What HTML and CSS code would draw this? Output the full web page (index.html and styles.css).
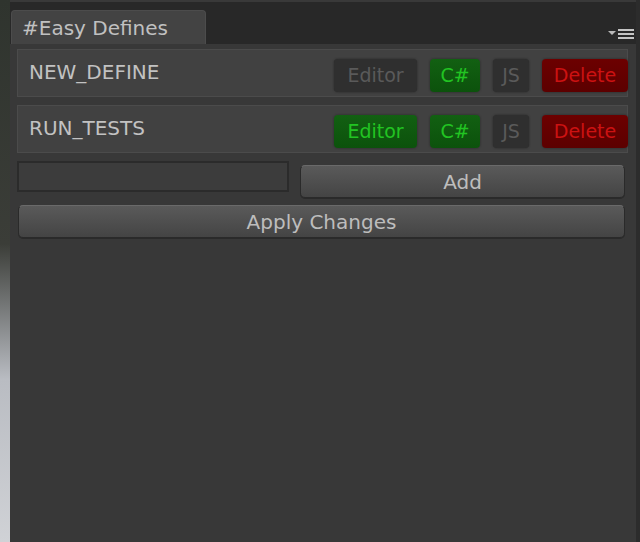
FILE: index.html
```html
<!doctype html>
<html lang="en">
<head>
    <meta charset="UTF-8">
    <title>Easy Defines</title>
    <link rel="stylesheet" href="styles.css">
</head>
<body>
    <div class="backdrop"></div>
    <div class="window">
        <div class="tabbar">
            <div class="tab">#Easy Defines</div>
            <div class="tab-menu">
                <svg width="30" height="12" viewBox="0 0 30 12">
                    <path d="M2 3h8l-4 4z" fill="#b8b8b8"/>
                    <rect x="12" y="1" width="16" height="2" fill="#c4c4c4"/>
                    <rect x="12" y="5" width="16" height="2" fill="#c4c4c4"/>
                    <rect x="12" y="9" width="16" height="2" fill="#c4c4c4"/>
                </svg>
            </div>
        </div>
        <div class="content">
            <div class="define">
                <span class="name">NEW_DEFINE</span>
                <div class="toggles">
                    <a href="#" class="btn off editor">Editor</a>
                    <a href="#" class="btn on cs">C#</a>
                    <a href="#" class="btn off js">JS</a>
                    <a href="#" class="btn del">Delete</a>
                </div>
            </div>
            <div class="define">
                <span class="name">RUN_TESTS</span>
                <div class="toggles">
                    <a href="#" class="btn on editor">Editor</a>
                    <a href="#" class="btn on cs">C#</a>
                    <a href="#" class="btn off js">JS</a>
                    <a href="#" class="btn del">Delete</a>
                </div>
            </div>
            <div class="add-row">
                <input type="text" class="field">
                <a href="#" class="push add">Add</a>
            </div>
            <a href="#" class="push apply">Apply Changes</a>
        </div>
    </div>
</body>
</html>
```

FILE: styles.css
```css
/*reset*/
*{
    margin:0;
    padding:0;
    box-sizing: border-box;
}
a{
    text-decoration:none;
}
body{
    display: flex;
    height: 542px;
    overflow: hidden;
    background: #383838;
    font-family: "DejaVu Sans", "Liberation Sans", sans-serif;
}

.backdrop{
    width: 10px;
    flex: none;
    background: linear-gradient(#2f342e 0%, #3b3d38 45%, #b9bcc2 70%, #d0d2d6 100%);
}
.window{
    flex: 1;
    display: flex;
    flex-direction: column;
    border-right: 4px solid #2c2c2c;
}

.tabbar{
    height: 44px;
    background: #282828;
    border-top: 2px solid #393939;
    display: flex;
    align-items: flex-end;
    padding-left: 1px;
}
.tab{
    width: 195px;
    height: 34px;
    background: #434343;
    border: 1px solid #4c4c4c;
    border-bottom: none;
    border-radius: 4px 4px 0 0;
    color: #c0c0c0;
    font-size: 20px;
    line-height: 34px;
    padding-left: 10px;
}
.tab-menu{
    margin-left: auto;
    padding-bottom: 4px;
}
.tab-menu svg{
    display: block;
}

.content{
    flex: 1;
    padding: 5px 8px 0 7px;
}

.define{
    height: 48px;
    background: #414141;
    border: 1px solid #4b4b4b;
    display: flex;
    align-items: center;
    padding-left: 11px;
    margin-bottom: 8px;
}
.define .name{
    color: #c2c2c2;
    font-size: 20px;
    padding-bottom: 2px;
}
.toggles{
    margin-left: auto;
    display: flex;
    gap: 13px;
    padding-top: 4px;
    margin-right: -1px;
}
.btn{
    display: block;
    height: 33px;
    line-height: 32px;
    text-align: center;
    font-size: 19px;
    border-radius: 4px;
    box-shadow: 0 0 2px #232323;
}
.btn.editor{ width: 83px; }
.btn.cs{ width: 50px; }
.btn.js{ width: 36px; }
.btn.del{ width: 86px; }
.btn.off{
    background: #2f2f2f;
    color: #5a5a5a;
}
.btn.on{
    background: linear-gradient(#126012, #0c520c);
    color: #22c422;
}
.btn.del{
    background: linear-gradient(#6c0000, #5c0000);
    color: #cc1212;
}

.add-row{
    display: flex;
    align-items: flex-start;
    margin-top: 1px;
}
.field{
    width: 272px;
    height: 31px;
    background: #3c3c3c;
    border: 2px solid #2b2b2b;
    outline: none;
}
.push{
    display: block;
    height: 33px;
    line-height: 33px;
    text-align: center;
    color: #bdbdbd;
    font-size: 20px;
    border-radius: 5px;
    background: linear-gradient(#5a5a5a, #444444);
    border: 1px solid #2a2a2a;
    border-top-color: #6a6a6a;
    box-shadow: 0 1px 0 #2a2a2a;
}
.add{
    width: 325px;
    margin-left: 11px;
    margin-top: 4px;
}
.apply{
    width: 607px;
    margin-left: 1px;
    margin-top: 7px;
}
```
